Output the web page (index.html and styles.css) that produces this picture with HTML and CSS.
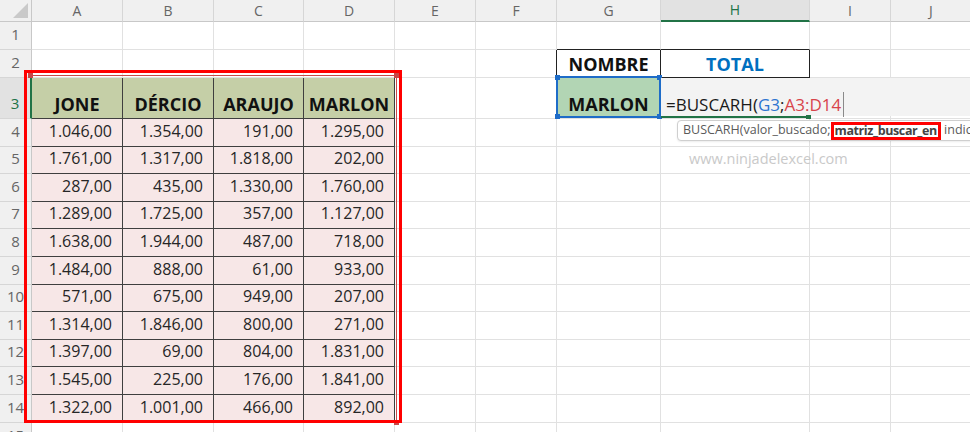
FILE: index.html
```html
<!DOCTYPE html>
<html lang="es">
<head>
    <meta charset="UTF-8">
    <meta name="viewport" content="width=device-width, initial-scale=1.0">
    <title>BUSCARH - Ninja del Excel</title>
    <link rel="stylesheet" href="styles.css">
</head>
<body>
    <div class="sheet-wrap">
        <!-- Hoja de cálculo -->
        <div class="sheet" id="sheet"></div>

        <!-- Rango A3:D14 referenciado en la fórmula -->
        <div class="ref-range">
            <span class="handle tl"></span>
            <span class="handle tr"></span>
            <span class="handle br"></span>
        </div>

        <!-- Referencia G3 -->
        <div class="ref-cell">
            <span class="handle tl"></span>
            <span class="handle tr"></span>
            <span class="handle bl"></span>
            <span class="handle br"></span>
        </div>

        <!-- Edición de la celda H3 -->
        <div class="editor">
            <span>=BUSCARH(</span><span class="ref-blue">G3</span><span>;</span><span class="ref-red">A3:D14</span><span class="caret"></span>
        </div>
        <div class="active-line"><span class="fill-handle"></span></div>

        <div class="tooltip">BUSCARH(valor_buscado;<span class="tip-mark">matriz_buscar_en</span> indicador_filas; [ordenado])</div>

        <div class="watermark">www.ninjadelexcel.com</div>

        <!-- Marca roja alrededor de la tabla -->
        <div class="annot-box"></div>
    </div>

    <script>
        const cols = ['A', 'B', 'C', 'D', 'E', 'F', 'G', 'H', 'I', 'J'];
        const names = ['JONE', 'DÉRCIO', 'ARAUJO', 'MARLON'];
        const data = [
            [1046, 1354, 191, 1295],
            [1761, 1317, 1818, 202],
            [287, 435, 1330, 1760],
            [1289, 1725, 357, 1127],
            [1638, 1944, 487, 718],
            [1484, 888, 61, 933],
            [571, 675, 949, 207],
            [1314, 1846, 800, 271],
            [1397, 69, 804, 1831],
            [1545, 225, 176, 1841],
            [1322, 1001, 466, 892]
        ];

        const sheet = document.getElementById('sheet');

        function fmt(n) {
            const s = String(n);
            return (s.length > 3 ? s.slice(0, -3) + '.' + s.slice(-3) : s) + ',00';
        }

        function addCell(cls, text) {
            const div = document.createElement('div');
            div.className = 'cell ' + cls;
            div.textContent = text;
            sheet.appendChild(div);
        }

        addCell('corner', '');
        cols.forEach(c => addCell(c === 'H' ? 'col-hd active' : 'col-hd', c));

        for (let r = 1; r <= 15; r++) {
            addCell(r === 3 ? 'row-hd active' : 'row-hd', r);
            cols.forEach((c, ci) => {
                let cls = '';
                let text = '';
                if (r === 3 && ci < 4) {
                    cls = 'tbl-head';
                    text = names[ci];
                } else if (r >= 4 && r <= 14 && ci < 4) {
                    cls = 'num';
                    text = fmt(data[r - 4][ci]);
                } else if (r === 1 && (c === 'G' || c === 'H')) {
                    cls = 'bb';
                } else if (r === 2 && c === 'F') {
                    cls = 'br';
                } else if (r === 2 && c === 'G') {
                    cls = 'label br bb';
                    text = 'NOMBRE';
                } else if (r === 2 && c === 'H') {
                    cls = 'label total br bb';
                    text = 'TOTAL';
                } else if (r === 3 && c === 'G') {
                    cls = 'label picked';
                    text = 'MARLON';
                }
                addCell(cls, text);
            });
        }
    </script>
</body>
</html>
```

FILE: styles.css
```css
* {
    margin: 0;
    padding: 0;
    box-sizing: border-box;
}

body {
    width: 970px;
    height: 432px;
    overflow: hidden;
    background: #fff;
    font-family: "Open Sans", "Noto Sans", Arial, sans-serif;
}

.sheet-wrap {
    position: relative;
    width: 972px;
}

.sheet {
    display: grid;
    grid-template-columns: 32px 91px 91px 90px 91px 81px 81px 104px 149px 81px 81px;
    grid-template-rows: 22px 28px 28px 41px repeat(11, 27.6px) 28px;
}

.cell {
    display: flex;
    align-items: flex-end;
    padding: 0 4px 5px;
    border-right: 1px solid #e1e1e1;
    border-bottom: 1px solid #e1e1e1;
    font-size: 16px;
    line-height: 20px;
    color: #262626;
    white-space: nowrap;
    overflow: hidden;
}

/* Cabeceras */
.corner {
    position: relative;
    background: #f0f0f0;
    border-right-color: #c8c8c8;
    border-bottom-color: #c8c8c8;
}

.corner::after {
    content: "";
    position: absolute;
    right: 3px;
    bottom: 3px;
    width: 15px;
    height: 15px;
    background: #c9c9c9;
    clip-path: polygon(100% 0, 100% 100%, 0 100%);
}

.col-hd {
    justify-content: center;
    align-items: center;
    padding: 0;
    background: #f0f0f0;
    border-right-color: #d6d6d6;
    border-bottom-color: #c8c8c8;
    font-size: 14px;
    color: #666;
}

.col-hd.active {
    background: #e2e2e2;
    color: #217346;
    border-bottom: 2px solid #217346;
}

.row-hd {
    justify-content: center;
    padding: 0 0 5px;
    background: #f0f0f0;
    border-right-color: #c8c8c8;
    border-bottom-color: #d6d6d6;
    font-size: 15px;
    color: #666;
}

.row-hd.active {
    background: #e2e2e2;
    color: #217346;
    border-right: 2px solid #217346;
}

/* Tabla */
.tbl-head {
    justify-content: center;
    padding-bottom: 3px;
    background: #c5cfa7;
    border-right-color: #3f3f3f;
    border-bottom-color: #3f3f3f;
    font-size: 18px;
    line-height: 22px;
    font-weight: 700;
    color: #111;
}

.num {
    justify-content: flex-end;
    padding-right: 10px;
    background: #f7e7e7;
    border-right-color: #3f3f3f;
    border-bottom-color: #3f3f3f;
}

.bb {
    border-bottom-color: #222;
}

.br {
    border-right-color: #222;
}

.label {
    justify-content: center;
    padding-bottom: 2px;
    font-size: 18px;
    line-height: 22px;
    font-weight: 700;
    color: #111;
}

.total {
    color: #0070c0;
}

.picked {
    padding-bottom: 3px;
    background: #b2d5b4;
}

/* Referencias de la fórmula */
.ref-range {
    position: absolute;
    left: 31px;
    top: 75px;
    width: 366px;
    height: 347px;
    border-top: 1px solid #c84848;
    border-right: 1px solid #c84848;
}

.ref-cell {
    position: absolute;
    left: 556px;
    top: 76px;
    width: 105px;
    height: 42px;
    border: 2px solid #1e6cc8;
}

.handle {
    position: absolute;
    width: 5px;
    height: 5px;
}

.ref-range .handle {
    background: #c84848;
}

.ref-cell .handle {
    background: #1e6cc8;
}

.handle.tl { left: -3px; top: -3px; }
.handle.tr { right: -3px; top: -3px; }
.handle.bl { left: -3px; bottom: -3px; }
.handle.br { right: -3px; bottom: -3px; }

.editor {
    position: absolute;
    left: 661px;
    top: 78px;
    width: 311px;
    height: 38px;
    padding: 14px 0 0 5px;
    background: #f3f3f3;
    font-size: 17px;
    line-height: 22px;
    color: #1a1a1a;
    white-space: nowrap;
}

.ref-blue {
    color: #2e75d0;
}

.ref-red {
    color: #d8434b;
}

.caret {
    display: inline-block;
    width: 1px;
    height: 25px;
    margin-left: 2px;
    vertical-align: -6px;
    background: #8a8a8a;
}

.active-line {
    position: absolute;
    left: 661px;
    top: 116px;
    width: 147px;
    height: 2px;
    background: #217346;
}

.fill-handle {
    position: absolute;
    right: -3px;
    top: -1px;
    width: 5px;
    height: 4px;
    background: #217346;
}

/* Ayuda de la función */
.tooltip {
    position: absolute;
    left: 677px;
    top: 120px;
    width: 320px;
    height: 21px;
    padding-left: 5px;
    background: #fff;
    border: 1px solid #cfcfcf;
    border-radius: 4px;
    box-shadow: 0 1px 2px rgba(0, 0, 0, 0.08);
    font-size: 12.5px;
    line-height: 18px;
    color: #5a5a5a;
    white-space: nowrap;
    overflow: hidden;
}

.tip-mark {
    display: inline-block;
    padding: 0 1px;
    border: 3px solid #ff0000;
    line-height: 12px;
    letter-spacing: -0.4px;
    vertical-align: -1px;
    font-weight: 700;
    color: #444;
}

.watermark {
    position: absolute;
    left: 689px;
    top: 149px;
    font-size: 14.5px;
    line-height: 20px;
    color: #c9c9c9;
}

.annot-box {
    position: absolute;
    left: 24px;
    top: 70px;
    width: 378px;
    height: 353px;
    border: 3px solid #ff0000;
}
```
